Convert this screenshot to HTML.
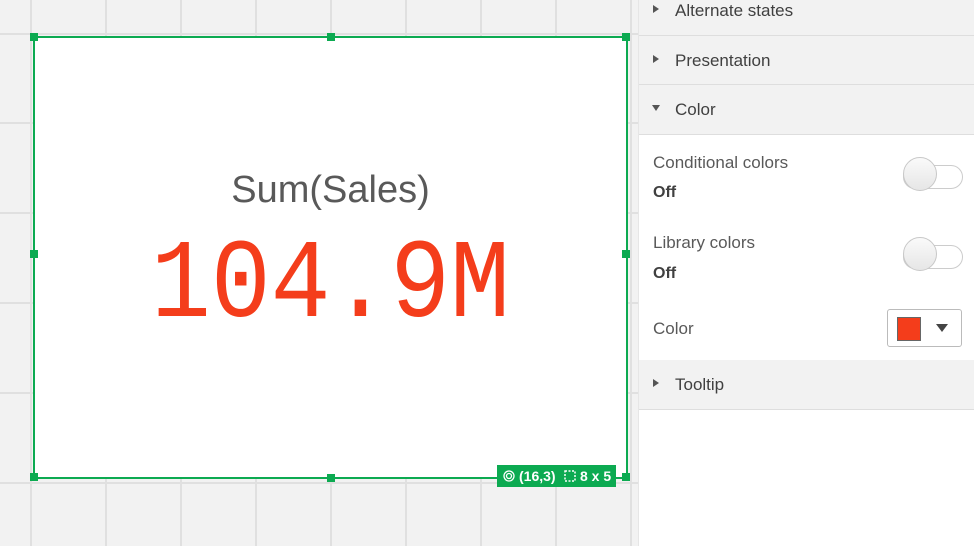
<!DOCTYPE html>
<html><head><style>
body{margin:0;width:974px;height:546px;overflow:hidden;background:#f2f2f2;font-family:"Liberation Sans",sans-serif;position:relative}
.v{position:absolute;top:0;width:2px;height:546px;background:#e0e0e0}
.h{position:absolute;left:0;width:638px;height:2px;background:#e0e0e0}
.frame{position:absolute;left:33px;top:36px;width:591px;height:439px;border:2px solid #0caa51;background:#fff}
.hd{position:absolute;width:8px;height:8px;background:#0caa51}
.panel{position:absolute;left:638px;top:0;width:336px;height:546px;background:#fff;border-left:1px solid #e6e6e6}
.sec{position:absolute;left:0;width:336px;background:#f2f2f2;border-bottom:1px solid #dedede;color:#404040;font-size:17px}
.sec span{position:absolute;left:36px}
.tri{position:absolute;left:14px;width:0;height:0}
.lbl{position:absolute;left:14px;color:#595959;font-size:17px}
.off{position:absolute;left:14px;color:#404040;font-size:16px;font-weight:bold}
.tg{position:absolute;left:264px;width:58px;height:22px;border:1px solid #ccc;border-radius:12px;background:#fff}
.knob{position:absolute;left:264px;width:32px;height:32px;border-radius:50%;border:1px solid #c8c8c8;background:linear-gradient(#fafafa,#e6e6e6)}
</style></head><body>
<div class="v" style="left:30px"></div><div class="v" style="left:105px"></div><div class="v" style="left:180px"></div><div class="v" style="left:255px"></div><div class="v" style="left:330px"></div><div class="v" style="left:405px"></div><div class="v" style="left:480px"></div><div class="v" style="left:555px"></div><div class="v" style="left:630px"></div>
<div class="h" style="top:33px"></div><div class="h" style="top:122px"></div><div class="h" style="top:212px"></div><div class="h" style="top:302px"></div><div class="h" style="top:392px"></div><div class="h" style="top:482px"></div>
<div class="frame">
<div style="position:absolute;left:0;width:591px;top:131px;text-align:center;font-size:38px;color:#595959">Sum(Sales)</div>
<div style="position:absolute;left:0;width:591px;top:184px;text-align:center;font-family:'Liberation Mono',monospace;font-size:112px;color:#f43d1b;transform:scaleX(0.89);line-height:130px">104.9M</div>
</div>
<div class="hd" style="left:30px;top:33px"></div><div class="hd" style="left:327px;top:33px"></div><div class="hd" style="left:622px;top:33px"></div>
<div class="hd" style="left:30px;top:250px"></div><div class="hd" style="left:622px;top:250px"></div>
<div class="hd" style="left:30px;top:473px"></div><div class="hd" style="left:327px;top:474px"></div><div class="hd" style="left:622px;top:473px"></div>
<div style="position:absolute;left:497px;top:465px;width:119px;height:22px;background:#0caa51;color:#fff;font-size:14px;line-height:22px;font-weight:bold">
<svg style="position:absolute;left:6px;top:5px" width="12" height="12" viewBox="0 0 12 12"><circle cx="6" cy="6" r="5" fill="none" stroke="#fff" stroke-width="1.3"/><circle cx="6" cy="6" r="2.5" fill="none" stroke="#fff" stroke-width="1.3"/></svg>
<span style="position:absolute;left:22px">(16,3)</span>
<svg style="position:absolute;left:67px;top:5px" width="12" height="12" viewBox="0 0 12 12"><rect x="1" y="1" width="10" height="10" fill="none" stroke="#fff" stroke-width="1.5" stroke-dasharray="2 1.5"/></svg>
<span style="position:absolute;left:83px">8 x 5</span></div>
<div class="panel">
<div class="sec" style="top:0;height:35px"><div class="tri" style="top:5px;border-left:6px solid #555;border-top:4px solid transparent;border-bottom:4px solid transparent"></div><span style="top:1px">Alternate states</span></div>
<div class="sec" style="top:36px;height:48px"><div class="tri" style="top:19px;border-left:6px solid #555;border-top:4px solid transparent;border-bottom:4px solid transparent"></div><span style="top:15px">Presentation</span></div>
<div class="sec" style="top:85px;height:49px"><div class="tri" style="top:20px;border-top:6px solid #555;border-left:4px solid transparent;border-right:4px solid transparent;left:13px"></div><span style="top:15px">Color</span></div>
<div class="lbl" style="top:153px">Conditional colors</div><div class="off" style="top:184px">Off</div>
<div class="tg" style="top:165px"></div><div class="knob" style="top:157px"></div>
<div class="lbl" style="top:233px">Library colors</div><div class="off" style="top:265px">Off</div>
<div class="tg" style="top:245px"></div><div class="knob" style="top:237px"></div>
<div class="lbl" style="top:319px">Color</div>
<div style="position:absolute;left:248px;top:309px;width:73px;height:36px;border:1px solid #bbb;border-radius:3px;background:#fff">
<div style="position:absolute;left:9px;top:7px;width:22px;height:22px;background:#f43d1b;border:1px solid #666"></div>
<div style="position:absolute;left:48px;top:14px;border-top:8px solid #444;border-left:6px solid transparent;border-right:6px solid transparent"></div></div>
<div class="sec" style="top:360px;height:49px"><div class="tri" style="top:19px;border-left:6px solid #555;border-top:4px solid transparent;border-bottom:4px solid transparent"></div><span style="top:15px">Tooltip</span></div>
</div>
</body></html>
